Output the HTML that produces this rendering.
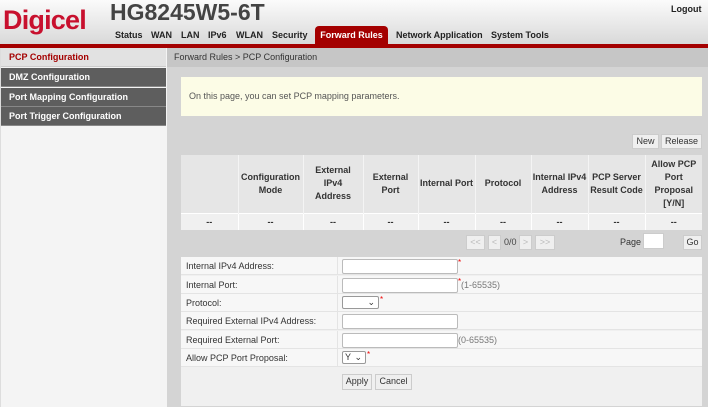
<!DOCTYPE html>
<html><head><style>
*{margin:0;padding:0;box-sizing:border-box}
body{width:708px;height:407px;overflow:hidden;font-family:"Liberation Sans",Arial,sans-serif;font-size:9px;color:#333;background:#d4d4d4;position:relative}
.a{position:absolute}
#hdr{left:0;top:0;width:708px;height:45px;background:linear-gradient(#fbfbfb,#d8d8d8)}
#bar{left:0;top:44px;width:708px;height:4px;background:#a40000}
.logo{left:3px;top:4px;font-size:27px;font-weight:bold;color:#c8102e;letter-spacing:-0.8px;line-height:32px}
.model{left:110px;top:-1px;font-size:23px;font-weight:bold;color:#444}
.nav{top:30px;font-size:9px;font-weight:bold;color:#222}
.fw{left:315px;top:26px;width:73px;height:19px;background:#a40000;color:#fff;border-radius:4px 4px 0 0;font-weight:bold;font-size:9px;text-align:center;line-height:19px}
#side{left:0;top:48px;width:167px;height:359px;background:#f4f4f4;border-left:1px solid #ddd}
.si{left:1px;width:165px;height:19px;line-height:19px;padding-left:8px;font-weight:bold;font-size:9px;color:#fff;background:#5e5e5e;border-bottom:1px solid #888}
#crumb{left:167px;top:48px;width:541px;height:19px;background:#c6c6c6;line-height:19px;padding-left:7px;font-size:9px;color:#333}
#info{left:181px;top:77px;width:521px;height:39px;background:#fcfce6;line-height:39px;padding-left:8px;color:#555}
.btn{background:#efefef;border:1px solid #ccc;font-size:9px;color:#333;text-align:center;line-height:13px;height:15px}
table{border-collapse:collapse;font-size:9px}
#tbl{left:181px;top:155px;width:521px}
#tbl th{background:#e6e6e6;font-weight:bold;color:#333;height:58px;border-right:1px solid #f4f4f4;text-align:center;line-height:13px}
#tbl td{background:#f0f0f0;height:17px;text-align:center;font-weight:bold;border-right:1px solid #fff;border-top:1px solid #fff}
#form{left:181px;top:257px;width:521px;height:149px;background:#f0f0f0}
.fr{position:absolute;left:0;width:521px;height:18px;background:#f7f7f7;border-bottom:1px solid #e4e4e4}
.fl{position:absolute;left:5px;top:4px;color:#333}
.fd{position:absolute;left:156px;top:0;width:1px;height:18px;background:#e4e4e4}
.in{position:absolute;left:161px;top:2px;width:116px;height:15px;background:#fff;border:1px solid #bbb;border-radius:2px}
.st{color:#e00;position:absolute;top:1px;font-size:8px}
.hint{position:absolute;top:4px;color:#777}
.sel{position:absolute;left:161px;top:2px;height:13px;background:#fff;border:1px solid #999;border-radius:2px;font-size:9px;line-height:11px;padding-left:2px}
</style></head><body>
<div class="a" id="hdr"></div>
<div class="a logo">Digicel</div>
<div class="a model">HG8245W5-6T</div>
<div class="a nav" style="left:115px">Status</div>
<div class="a nav" style="left:151px">WAN</div>
<div class="a nav" style="left:181px">LAN</div>
<div class="a nav" style="left:208px">IPv6</div>
<div class="a nav" style="left:236px">WLAN</div>
<div class="a nav" style="left:272px">Security</div>
<div class="a fw">Forward Rules</div>
<div class="a nav" style="left:396px">Network Application</div>
<div class="a nav" style="left:491px">System Tools</div>
<div class="a" style="left:671px;top:4px;font-weight:bold;font-size:9px;color:#222">Logout</div>
<div class="a" id="bar"></div>
<div class="a" id="side"></div>
<div class="a si" style="top:48px;background:#e2e2e2;color:#a40000;border-bottom:1px solid #ccc">PCP Configuration</div>
<div class="a si" style="top:68px">DMZ Configuration</div>
<div class="a si" style="top:88px">Port Mapping Configuration</div>
<div class="a si" style="top:107px">Port Trigger Configuration</div>
<div class="a" id="crumb">Forward Rules &gt; PCP Configuration</div>
<div class="a" id="info">On this page, you can set PCP mapping parameters.</div>
<div class="a btn" style="left:632px;top:134px;width:27px">New</div>
<div class="a btn" style="left:661px;top:134px;width:41px">Release</div>
<table class="a" id="tbl"><tr>
<th style="width:57px"></th><th style="width:65px">Configuration<br>Mode</th><th style="width:60px">External<br>IPv4<br>Address</th><th style="width:55px">External<br>Port</th><th style="width:57px">Internal Port</th><th style="width:56px">Protocol</th><th style="width:57px">Internal IPv4<br>Address</th><th style="width:57px">PCP Server<br>Result Code</th><th style="width:57px;border-right:0">Allow PCP<br>Port<br>Proposal<br>[Y/N]</th></tr>
<tr><td>--</td><td>--</td><td>--</td><td>--</td><td>--</td><td>--</td><td>--</td><td>--</td><td style="border-right:0">--</td></tr></table>
<div class="a btn" style="left:466px;top:235px;width:19px;color:#bbb">&lt;&lt;</div>
<div class="a btn" style="left:488px;top:235px;width:13px;color:#bbb">&lt;</div>
<div class="a" style="left:504px;top:237px;color:#444">0/0</div>
<div class="a btn" style="left:519px;top:235px;width:13px;color:#bbb">&gt;</div>
<div class="a btn" style="left:535px;top:235px;width:20px;color:#bbb">&gt;&gt;</div>
<div class="a" style="left:620px;top:237px">Page</div>
<div class="a" style="left:643px;top:233px;width:21px;height:16px;background:#fff;border:1px solid #ccc"></div>
<div class="a btn" style="left:683px;top:235px;width:19px">Go</div>
<div class="a" id="form">
<div class="fr" style="top:0"><div class="fl">Internal IPv4 Address:</div><div class="fd"></div><div class="in"></div><span class="st" style="left:277px">*</span></div>
<div class="fr" style="top:19px"><div class="fl">Internal Port:</div><div class="fd"></div><div class="in"></div><span class="st" style="left:277px">*</span><span class="hint" style="left:280px">(1-65535)</span></div>
<div class="fr" style="top:37px"><div class="fl">Protocol:</div><div class="fd"></div><div class="sel" style="width:37px"><span style="position:absolute;right:3px;top:0">&#8964;</span></div><span class="st" style="left:199px">*</span></div>
<div class="fr" style="top:55px"><div class="fl">Required External IPv4 Address:</div><div class="fd"></div><div class="in"></div></div>
<div class="fr" style="top:74px"><div class="fl">Required External Port:</div><div class="fd"></div><div class="in"></div><span class="hint" style="left:277px">(0-65535)</span></div>
<div class="fr" style="top:92px"><div class="fl">Allow PCP Port Proposal:</div><div class="fd"></div><div class="sel" style="width:24px">Y<span style="position:absolute;right:3px;top:0">&#8964;</span></div><span class="st" style="left:186px">*</span></div>
<div class="btn" style="position:absolute;left:161px;top:117px;width:30px;height:16px">Apply</div>
<div class="btn" style="position:absolute;left:194px;top:117px;width:37px;height:16px">Cancel</div>
</div>
</body></html>
